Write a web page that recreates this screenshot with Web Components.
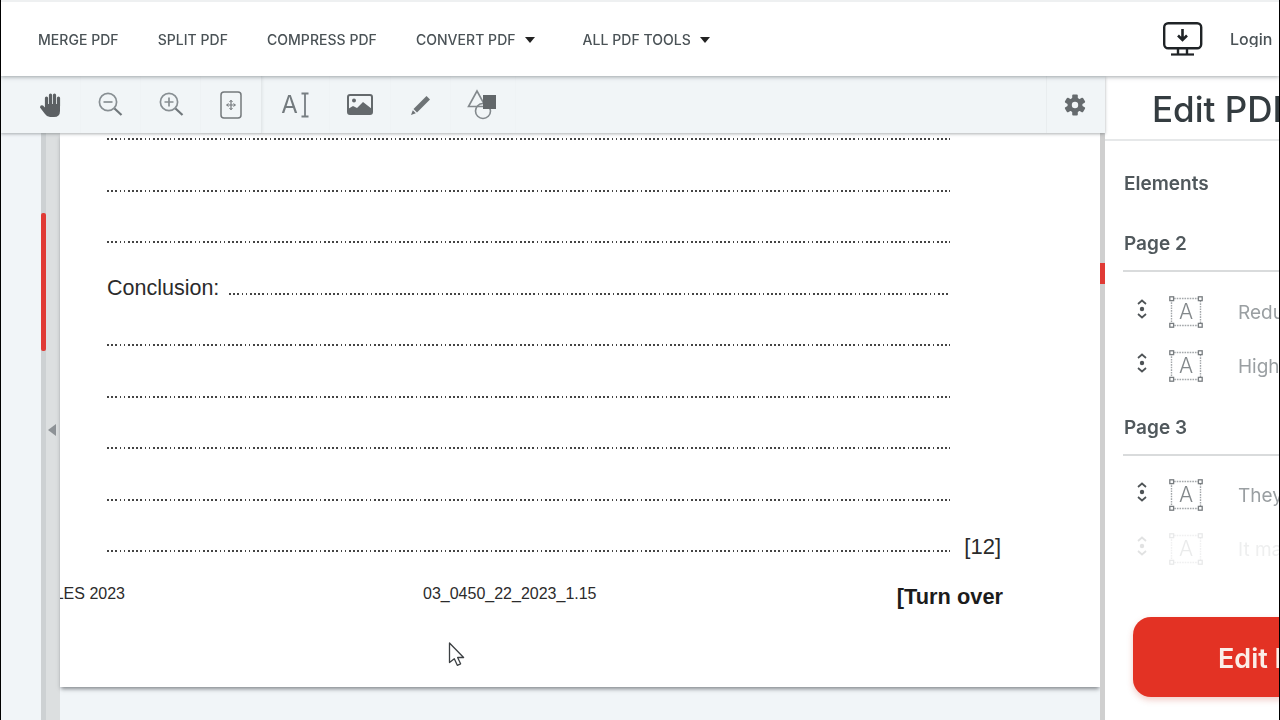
<!DOCTYPE html>
<html lang="en">
<head>
<meta charset="utf-8">
<title>Edit PDF</title>
<style>
html,body{margin:0;padding:0;background:#fff;}
body{width:1280px;height:720px;overflow:hidden;font-family:Inter,"Liberation Sans",sans-serif;}
</style>
</head>
<body>
<pdf-app></pdf-app>
<script>
function def(name, html){
  customElements.define(name, class extends HTMLElement{
    connectedCallback(){
      if(this.shadowRoot) return;
      const r=this.attachShadow({mode:'open'});
      r.innerHTML = typeof html==='function' ? html(this) : html;
    }
  });
}
def('nav-link', el=>`<style>
:host{display:flex;align-items:center;gap:9px;font:500 14px/1 Inter,sans-serif;letter-spacing:.04px;color:#4a5256;white-space:nowrap}
i{display:block;width:0;height:0;border:5.5px solid transparent;border-top:6px solid #222;border-bottom:0;}
</style><slot></slot>${el.hasAttribute('caret')?'<i></i>':''}`);

def('top-nav', `<style>
:host{display:flex;align-items:center;box-sizing:border-box;height:76px;background:#fff;border-top:2px solid #eef0f1;padding:1px 0 0 37px;position:relative;z-index:3;box-shadow:0 1px 4px rgba(70,80,85,.5)}
nav{display:flex;align-items:center}
nav-link{margin-right:39px}
nav-link.c{margin-right:48px}
.r{margin:-2px 0 0 auto;display:flex;align-items:center;gap:27px}
svg{display:block}
.login{font:500 16px/1 Inter,sans-serif;color:#4a5256;white-space:nowrap;width:49px;overflow:hidden}
</style>
<nav>
<nav-link>MERGE PDF</nav-link>
<nav-link>SPLIT PDF</nav-link>
<nav-link>COMPRESS PDF</nav-link>
<nav-link class="c" caret>CONVERT PDF</nav-link>
<nav-link caret>ALL PDF TOOLS</nav-link>
</nav>
<div class="r">
<svg width="40" height="36" viewBox="0 0 40 36" fill="none" stroke="#1f2326" stroke-width="2.4"><rect x="1.200" y="2.200" width="37" height="25" rx="4"/><path d="M19.500 8v11M15 14.500l4.500 4.500 4.500-4.500" stroke-width="2.600"/><path d="M15 28v5M24 28v5"/><path d="M8 33.500h23" stroke-width="2.200"/></svg>
<span class="login">Login</span>
</div>`);

def('tool-btn', `<style>
:host{display:flex;align-items:center;justify-content:center;box-sizing:border-box;height:100%;border-right:1px solid #eff3f5;flex:none}
:host([strong]){border-right:1px solid #e4e8ea;box-shadow:1px 0 2px rgba(90,100,105,.08)}
</style><slot></slot>`);

def('edit-toolbar', `<style>
:host{display:flex;box-sizing:border-box;height:57px;background:#f1f5f7;padding-left:20px;position:relative;z-index:2;box-shadow:0 1px 3px rgba(70,80,85,.45);font-family:Inter,sans-serif}
svg{display:block}
.a{font:400 24px/1 Inter,sans-serif;color:#737a7e;margin-right:2px}
.ai{display:flex;align-items:center}
.g{margin-left:auto;margin-right:3px;border-left:1px solid #e9edef;border-right:0}
</style>
<tool-btn style="width:60px"><svg width="24" height="26" viewBox="0 0 24 26"><g stroke="#5c6063" stroke-width="3.2" stroke-linecap="round"><path d="M7.500 14V6M11.500 14V3M15.500 14V3M19.500 14V6"/></g><path d="M6 12h15v7q0 6-6 6h-4q-3 0-5-3L1 15.500q0-3 3-2l2 2z" fill="#5c6063"/></svg></tool-btn>
<tool-btn style="width:60px"><svg width="28" height="28" viewBox="0 0 28 28" fill="none" stroke="#888f93" stroke-width="1.700"><circle cx="11" cy="11" r="8.600"/><path d="M6.500 11h9"/><path d="M17.500 17.500l7 6.500" stroke-width="2.200" stroke="#70777b"/></svg></tool-btn>
<tool-btn style="width:60px;padding-left:2px"><svg width="28" height="28" viewBox="0 0 28 28" fill="none" stroke="#888f93" stroke-width="1.700"><circle cx="11" cy="11" r="8.600"/><path d="M6.500 11h9M11 6.500v9"/><path d="M17.500 17.500l7 6.500" stroke-width="2.200" stroke="#70777b"/></svg></tool-btn>
<tool-btn strong style="width:61px"><svg width="22" height="28" viewBox="0 0 22 28" fill="none" stroke="#74797c" stroke-width="1.500"><rect x="1" y="1" width="20" height="26" rx="3"/><path d="M11 9.500v9M6.500 14h9" stroke-width="1.200"/><path d="M9.500 11l1.500-1.800 1.500 1.800M9.500 17l1.500 1.800 1.500-1.800M8.500 12.500L6.700 14l1.800 1.500M13.500 12.500L15.300 14l-1.800 1.500" stroke-width="1"/></svg></tool-btn>
<tool-btn style="width:68px"><span class="ai"><span class="a">A</span><svg width="10" height="26" viewBox="0 0 10 26" fill="none" stroke="#777e82" stroke-width="1.800"><path d="M1.500 1.500h7M5 1.500v23M1.500 24.500h7"/></svg></span></tool-btn>
<tool-btn style="width:61px"><svg width="26" height="21" viewBox="0 0 26 21"><rect x="1" y="1" width="24" height="19" rx="2" fill="none" stroke="#64696c" stroke-width="2"/><circle cx="7" cy="6.500" r="2" fill="#64696c"/><path d="M1 20v-5l5-3 4 2 6-6 9 7v5z" fill="#64696c"/></svg></tool-btn>
<tool-btn style="width:60px"><svg width="22" height="22" viewBox="0 0 22 22" fill="#6e7376"><path d="M16.500 2l3.500 3.500L7 18.500 3.500 15z"/><path d="M2.800 16.200l3 3L1 21z"/></svg></tool-btn>
<tool-btn style="width:65px"><svg width="32" height="32" viewBox="0 0 32 32" fill="none" stroke="#83898d" stroke-width="1.600"><path d="M10 2L1.500 17.500h17z"/><circle cx="16" cy="22" r="7.500"/><rect x="16" y="6" width="13" height="14" fill="#62676a" stroke="none"/></svg></tool-btn>
<tool-btn class="g" style="width:56px"><svg width="22" height="22" viewBox="-11 -11 22 22"><g fill="#666b6e"><circle r="7.500"/><rect x="-2.800" y="-10.500" width="5.600" height="21" rx="1"/><rect x="-2.800" y="-10.500" width="5.600" height="21" rx="1" transform="rotate(60)"/><rect x="-2.800" y="-10.500" width="5.600" height="21" rx="1" transform="rotate(120)"/></g><circle r="3.200" fill="#f1f5f7"/></svg></tool-btn>`);

def('dot-row', el=>`<style>
:host{display:flex;align-items:flex-end;color:#2b2b2b;font:21.500px/1 "Liberation Sans",Arial,sans-serif;white-space:nowrap}
.l{margin:0 10px -5px 0}
.l:empty{display:none}
.d{flex:1;height:2px;background:repeating-linear-gradient(90deg,#444 0 1.700px,transparent 1.700px 4.170px)}
.e{width:51px;text-align:right;font-size:22px;margin-bottom:-6px}
</style><span class="l">${el.getAttribute('label')||''}</span><div class="d"></div><span class="e">${el.getAttribute('end')||''}</span>`);

def('doc-page', `<style>
:host{display:block;height:554px;background:#fff;overflow:hidden;position:relative;box-shadow:0 3px 4px -1px rgba(60,65,70,.6);font-family:"Liberation Sans",Arial,sans-serif}
.rows{display:grid;grid-template-rows:7px repeat(8,51.500px);padding:0 99px 0 47px}
.f{display:flex;align-items:flex-start;margin-top:33px;color:#2b2b2b;white-space:nowrap;font-size:16px;line-height:18px}
.les{width:65px;display:flex;justify-content:flex-end;flex:none}
.code{margin-left:298px}
.turn{margin-left:auto;margin-right:97px;font:700 21.800px/24px "Liberation Sans",Arial,sans-serif;color:#1c1c1c}
svg{position:absolute;left:388px;top:509px}
</style>
<div class="rows">
<dot-row></dot-row><dot-row></dot-row><dot-row></dot-row>
<dot-row label="Conclusion:"></dot-row>
<dot-row></dot-row><dot-row></dot-row><dot-row></dot-row><dot-row></dot-row>
<dot-row end="[12]"></dot-row>
</div>
<div class="f"><span class="les"><span>LES 2023</span></span><span class="code">03_0450_22_2023_1.15</span><span class="turn">[Turn over</span></div>
<svg width="18" height="25" viewBox="0 0 18 25"><path d="M1.500 1v19.500l4.800-3.700 3 6.500 3.300-1.500-3-6.300h6z" fill="#fff" stroke="#3c4043" stroke-width="1.300" stroke-linejoin="round"/></svg>`);

def('doc-viewer', `<style>
:host{display:flex;flex:1;min-height:0;background:#f1f5f8;overflow:hidden}
.gut{width:40px;flex:none}
.track{width:19px;flex:none;background:#dcdfe0;position:relative;border-left:5px solid #cdd1d3;box-sizing:border-box}
.thumb{position:absolute;left:-5px;top:80px;width:5px;height:138px;background:#e03a35;border-radius:2px}
.arr{position:absolute;left:2px;top:291px;width:0;height:0;border:6px solid transparent;border-right:8px solid #8d9296;border-left:0}
.main{flex:1;min-width:0}
.sb{width:5px;flex:none;background:#cfcfcf;position:relative}
.sb i{position:absolute;left:0;top:130px;width:5px;height:21px;background:#e03a35}
</style>
<div class="gut"></div>
<div class="track"><div class="thumb"></div><div class="arr"></div></div>
<div class="main"><doc-page></doc-page></div>
<div class="sb"><i></i></div>`);

def('element-row', `<style>
:host{display:flex;align-items:center;height:54px;color:#9a9fa2;font:400 19px/1 Inter,sans-serif;white-space:nowrap}
svg{display:block;flex:none}
.drag{margin:-6px 0 0 12px}
.box{position:relative;width:34px;height:32px;margin:0 0 0 20px;flex:none}
.box span{position:absolute;inset:0;text-align:center;font:300 21px/32px Inter,sans-serif;color:#83888b}
.t{margin-left:35px}
</style>
<svg class="drag" width="14" height="22" viewBox="0 0 14 22" fill="none" stroke="#4e5356" stroke-width="1.700"><path d="M3 6l4-3.500L11 6M3 16l4 3.500L11 16"/><circle cx="7" cy="11" r="2.200" fill="#4e5356" stroke="none"/></svg>
<div class="box"><svg width="34" height="32" viewBox="0 0 34 32" fill="#fff"><rect x="2.500" y="2.500" width="29" height="27" fill="none" stroke="#a3a7aa" stroke-width="1.400" stroke-dasharray="1.600 1"/><g stroke="#787d80" stroke-width="1.300"><rect x=".8" y=".8" width="3.800" height="3.800"/><rect x="29.400" y=".8" width="3.800" height="3.800"/><rect x=".8" y="27.400" width="3.800" height="3.800"/><rect x="29.400" y="27.400" width="3.800" height="3.800"/></g></svg><span>A</span></div>
<span class="t"><slot></slot></span>`);

def('side-panel', `<style>
:host{display:flex;flex-direction:column;width:174px;flex:none;background:#fff;overflow:hidden;position:relative;font-family:Inter,sans-serif}
h1{margin:0;box-sizing:border-box;height:65px;padding:14px 0 0 47px;font:550 35px/38px Inter,sans-serif;color:#343c40;border-bottom:2px solid #e6e8e9;white-space:nowrap}
.b{padding:0 0 0 18px;display:flex;flex-direction:column}
h2{margin:0;font:600 19px/22px Inter,sans-serif;color:#50585c;white-space:nowrap;text-indent:1px}
.e{margin-top:32px}
.p2{margin-top:38px;padding-bottom:15px;border-bottom:2px solid #d9dbdc;margin-bottom:13px}
.p3{margin-top:24px;padding-bottom:15px;border-bottom:2px solid #d9dbdc;margin-bottom:12px}
.fade{opacity:.17}
button{all:unset;display:block;box-sizing:border-box;margin:41px 0 0 28px;width:170px;height:80px;border-radius:18px;background:#e33224;color:#fbeee8;font:600 27px/84px Inter,sans-serif;padding-left:85px;white-space:nowrap;box-shadow:0 3px 6px rgba(200,60,40,.25)}
</style>
<h1>Edit PDF</h1>
<div class="b">
<h2 class="e">Elements</h2>
<h2 class="p2">Page 2</h2>
<element-row>Redu</element-row>
<element-row>High</element-row>
<h2 class="p3">Page 3</h2>
<element-row>They</element-row>
<element-row class="fade">It ma</element-row>
</div>
<button>Edit PDF</button>`);

def('pdf-app', `<style>
:host{display:flex;flex-direction:column;box-sizing:border-box;width:1280px;height:720px;border-left:1px solid #000;border-right:1px solid #000;overflow:hidden;background:#fff}
.m{display:flex;flex:1;min-height:0}
.l{display:flex;flex-direction:column;flex:1;min-width:0}
.w{display:flex;flex-direction:column;flex:1;min-height:0;filter:blur(.35px)}
</style>
<div class="w">
<top-nav></top-nav>
<div class="m"><div class="l"><edit-toolbar></edit-toolbar><doc-viewer></doc-viewer></div><side-panel></side-panel></div>
</div>`);
</script>
</body>
</html>
